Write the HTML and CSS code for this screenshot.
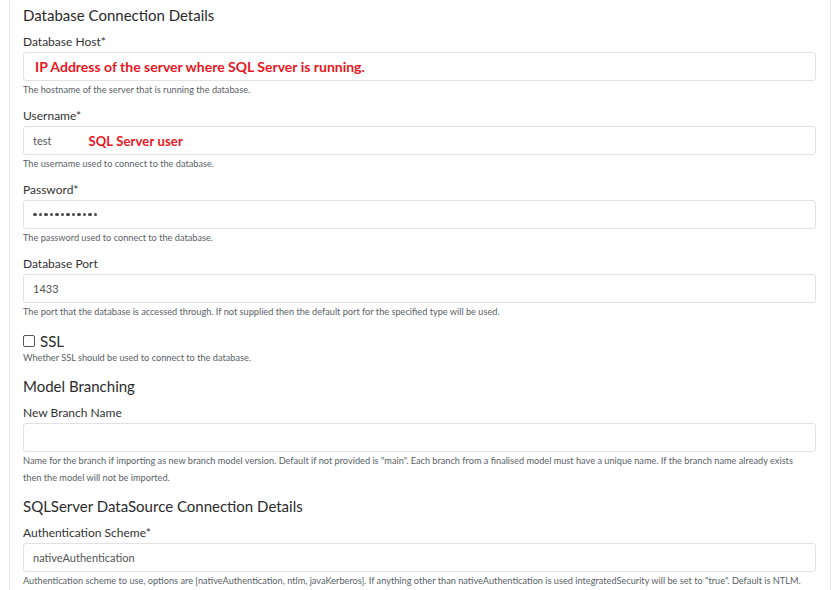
FILE: index.html
```html
<!DOCTYPE html>
<html lang="en">
<head>
<meta charset="utf-8">
<title>Database Connection Details</title>
<link rel="stylesheet" href="styles.css">
</head>
<body>
<div class="panel">
  <h3 class="section-title first">Database Connection Details</h3>

  <div class="field">
    <div class="field-label">Database Host*</div>
    <div class="input"><span class="note note-lg">IP Address of the server where SQL Server is running.</span></div>
    <div class="help">The hostname of the server that is running the database.</div>
  </div>

  <div class="field">
    <div class="field-label">Username*</div>
    <div class="input"><span class="value">test</span><span class="note note-sm">SQL Server user</span></div>
    <div class="help">The username used to connect to the database.</div>
  </div>

  <div class="field">
    <div class="field-label">Password*</div>
    <div class="input"><span class="dots"><i></i><i></i><i></i><i></i><i></i><i></i><i></i><i></i><i></i><i></i><i></i><i></i></span></div>
    <div class="help">The password used to connect to the database.</div>
  </div>

  <div class="field">
    <div class="field-label">Database Port</div>
    <div class="input"><span class="value">1433</span></div>
    <div class="help">The port that the database is accessed through. If not supplied then the default port for the specified type will be used.</div>
  </div>

  <div class="field check-field">
    <div class="check-row"><span class="checkbox"></span><span class="check-label">SSL</span></div>
    <div class="help">Whether SSL should be used to connect to the database.</div>
  </div>

  <h3 class="section-title">Model Branching</h3>

  <div class="field">
    <div class="field-label">New Branch Name</div>
    <div class="input"></div>
    <div class="help">Name for the branch if importing as new branch model version. Default if not provided is "main". Each branch from a finalised model must have a unique name. If the branch name already exists then the model will not be imported.</div>
  </div>

  <h3 class="section-title">SQLServer DataSource Connection Details</h3>

  <div class="field">
    <div class="field-label">Authentication Scheme*</div>
    <div class="input"><span class="value">nativeAuthentication</span></div>
    <div class="help">Authentication scheme to use, options are [nativeAuthentication, ntlm, javaKerberos]. If anything other than nativeAuthentication is used integratedSecurity will be set to "true". Default is NTLM.</div>
  </div>
</div>
</body>
</html>
```

FILE: styles.css
```css
html, body {
  margin: 0;
  padding: 0;
  background: #ffffff;
}

body {
  font-family: Lato, "Open Sans", sans-serif;
  color: #333333;
  height: 590px;
  overflow: hidden;
}

.panel {
  margin-left: 9px;
  width: 793px;
  min-height: 590px;
  border-left: 1px solid #ececec;
  border-right: 1px solid #ececec;
  padding: 0 14px 0 13px;
  box-sizing: content-box;
}

.section-title {
  margin: 0;
  padding-top: 11px;
  font-size: 15px;
  font-weight: 400;
  line-height: 18px;
  color: #2b2b2b;
}

.section-title.first {
  padding-top: 6px;
}

.field {
  padding-top: 11px;
}

.field-label {
  font-size: 12px;
  line-height: 14px;
  color: #333333;
  margin-bottom: 3px;
}

.input {
  height: 27px;
  border: 1px solid #e2e2e2;
  border-radius: 3px;
  display: flex;
  align-items: center;
  padding: 0 9px;
  background: #fff;
}

.value {
  font-size: 11px;
  color: #555555;
}

.note {
  color: #e8161e;
  font-weight: 700;
}

.note-lg {
  font-size: 14px;
  margin-left: 2px;
}

.note-sm {
  font-size: 13px;
  letter-spacing: 0.15px;
  margin-left: 37px;
}

.dots {
  display: flex;
  gap: 2px;
}

.dots i {
  width: 3.5px;
  height: 3.5px;
  border-radius: 50%;
  background: #4a4a4a;
}

.help {
  max-width: 785px;
  font-size: 9.2px;
  line-height: 17px;
  color: #5a5f66;
}

.check-field {
  padding-top: 12px;
}

.check-row {
  display: flex;
  align-items: center;
  height: 17px;
}

.checkbox {
  width: 10px;
  height: 10px;
  border: 1px solid #555;
  border-radius: 2px;
  margin-right: 5px;
}

.check-label {
  font-size: 15px;
  color: #2b2b2b;
}
```
